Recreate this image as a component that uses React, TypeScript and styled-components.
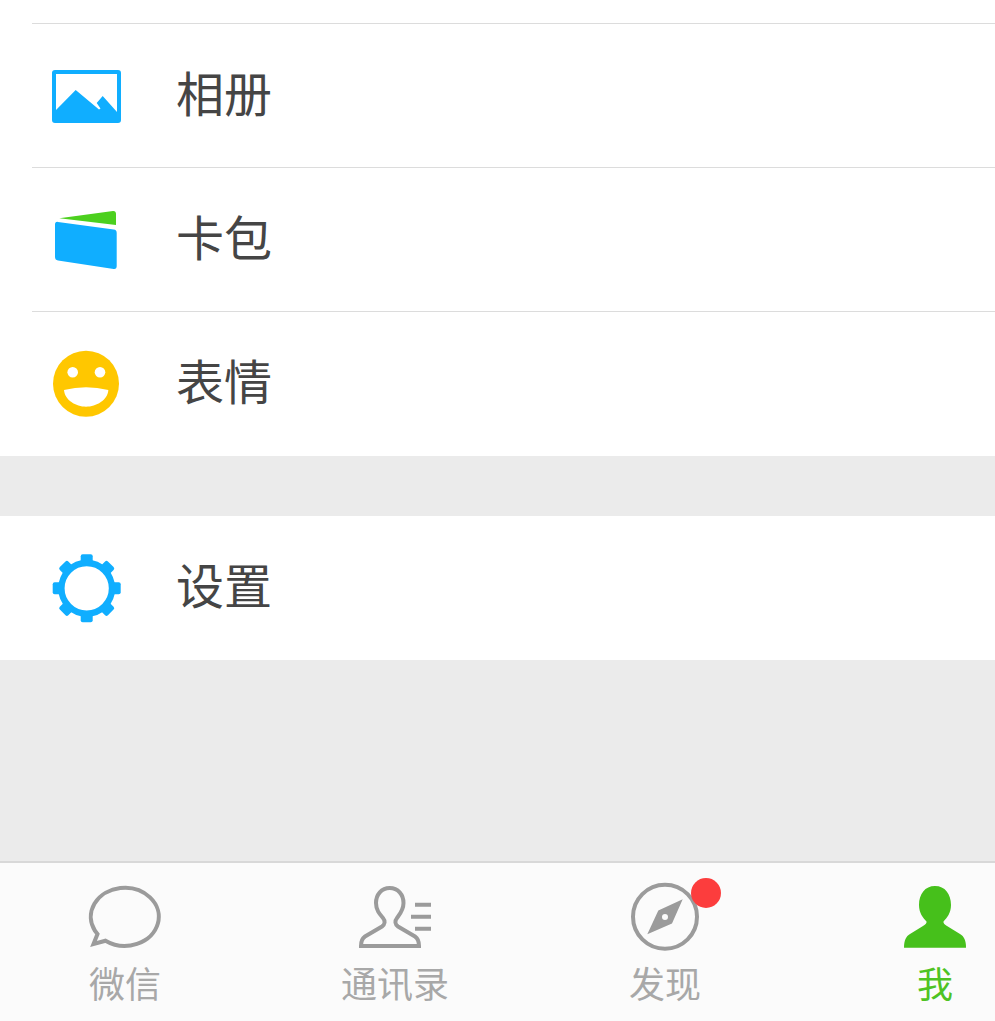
import React from "react";
import styled, { createGlobalStyle } from "styled-components";

const Global = createGlobalStyle`
  html, body { margin: 0; padding: 0; background: #ebebeb; overflow: hidden; }
  * { box-sizing: border-box; }
`;

const Page = styled.div`
  width: 100%;
  height: 100vh;
  display: flex;
  flex-direction: column;
  overflow: hidden;
  background: #ebebeb;
  font-family: "Noto Sans CJK SC", "Noto Sans", sans-serif;
`;

const Section = styled.section<{ $gap?: number; $pad?: number }>`
  background: #fff;
  margin-top: ${(p) => p.$gap ?? 0}px;
  padding-top: ${(p) => p.$pad ?? 0}px;
  padding-bottom: ${(p) => (p.$pad ? 1 : 0)}px;
  flex-shrink: 0;
`;

const Row = styled.div<{ $line?: boolean }>`
  height: 144px;
  margin-left: 32px;
  display: flex;
  align-items: flex-start;
  border-top: ${(p) => (p.$line ? "1px solid #dcdcdc" : "0")};
`;

const IconSlot = styled.div`
  width: 144px;
  height: 112px;
  padding: 32px 0 0 16px;
  flex-shrink: 0;
`;

const RowIcon = styled.svg`
  display: block;
  width: 80px;
  height: 80px;
`;

const RowLabel = styled.span`
  font-size: 48px;
  line-height: 135px;
  font-weight: 400;
  color: #454545;
`;

const Filler = styled.div`
  flex: 1;
`;

const TabBar = styled.nav`
  width: 1080px;
  height: 160px;
  margin-left: -10px;
  flex-shrink: 0;
  display: flex;
  background: #fbfbfb;
  border-top: 2px solid #d8d8d8;
`;

const Tab = styled.div`
  width: 270px;
  padding-top: 18px;
  display: flex;
  flex-direction: column;
  align-items: center;
`;

const TabIconWrap = styled.div`
  position: relative;
  width: 90px;
  height: 70px;
`;

const TabIcon = styled.svg`
  display: block;
  width: 90px;
  height: 70px;
  overflow: visible;
`;

const Badge = styled.span`
  position: absolute;
  left: 71px;
  top: -3px;
  width: 30px;
  height: 30px;
  border-radius: 50%;
  background: #fc3d3d;
`;

const TabLabel = styled.span<{ $active?: boolean }>`
  font-size: 36px;
  line-height: 62px;
  font-weight: 400;
  color: ${(p) => (p.$active ? "#4ec323" : "#a8a8a8")};
`;

const BLUE = "#10aeff";
const GREY = "#9b9b9b";

const rows1 = [
  {
    label: "相册",
    icon: (
      <path
        fill={BLUE}
        fillRule="evenodd"
        d="M7 14H70A3 3 0 0 1 73 17V64A3 3 0 0 1 70 67H7A3 3 0 0 1 4 64V17A3 3 0 0 1 7 14ZM8 18V54L27.7 34L51 53.5L52.5 52.5L48.7 47L54.7 40L69 56V18Z"
      />
    ),
  },
  {
    label: "卡包",
    icon: (
      <>
        <path fill="#4cd01e" d="M11.3 18.3L65 11Q68 10.8 68 14V25Z" />
        <path
          fill={BLUE}
          d="M10 21.9L65.7 29.6Q68.7 30 68.7 33V66Q68.7 69.4 65.7 69L10 60.5Q7 60 7 57V24.5Q7 21.5 10 21.9Z"
        />
      </>
    ),
  },
  {
    label: "表情",
    icon: (
      <>
        <circle cx="38" cy="39.7" r="33" fill="#ffc700" />
        <circle cx="24.7" cy="28.3" r="5.3" fill="#fff" />
        <circle cx="52" cy="28.3" r="5.3" fill="#fff" />
        <path
          fill="#fff"
          d="M16 46Q38 40.5 60.3 46C60 56 48 62.7 38 62.7C28 62.7 16.5 56 16 46Z"
        />
      </>
    ),
  },
];

const angles = [0, 45, 90, 135, 180, 225, 270, 315];

const Gear = () => (
  <>
    <circle cx="38.7" cy="40.3" r="25.3" fill="none" stroke={BLUE} strokeWidth="6.4" />
    {angles.map((a) => (
      <rect
        key={a}
        x="32.7"
        y="6.3"
        width="12"
        height="10"
        rx="2"
        fill={BLUE}
        transform={`rotate(${a} 38.7 40.3)`}
      />
    ))}
  </>
);

export default function App() {
  return (
    <Page>
      <Global />
      <Section $pad={23}>
        {rows1.map((r) => (
          <Row $line key={r.label}>
            <IconSlot>
              <RowIcon viewBox="0 0 80 80">{r.icon}</RowIcon>
            </IconSlot>
            <RowLabel>{r.label}</RowLabel>
          </Row>
        ))}
      </Section>
      <Section $gap={60}>
        <Row>
          <IconSlot>
            <RowIcon viewBox="0 0 80 80">
              <Gear />
            </RowIcon>
          </IconSlot>
          <RowLabel>设置</RowLabel>
        </Row>
      </Section>
      <Filler />
      <TabBar>
        <Tab>
          <TabIconWrap>
            <TabIcon viewBox="0 1 90 70">
              <path
                fill="none"
                stroke={GREY}
                strokeWidth="4"
                d="M25.5 60.7A34 29 0 1 0 15 50.8L17.5 54L13.5 64Z"
              />
            </TabIcon>
          </TabIconWrap>
          <TabLabel>微信</TabLabel>
        </Tab>
        <Tab>
          <TabIconWrap>
            <TabIcon viewBox="0 1 90 70">
              <path
                fill="none"
                stroke={GREY}
                strokeWidth="4"
                d="M39.7 8C31.5 8 26 14.5 26 23C26 30 29.5 34 33 38C35.5 41 35 44.5 32 46.5L15 56.5C12 58.5 11 61 11 66H69C69 61 68 58.5 65 56.5L48 46.5C45 44.5 44.5 41 47 38C50 34 53.5 30 53.5 23C53.5 14.5 48 8 39.7 8Z"
              />
              <path fill={GREY} d="M65 22.7H81V26.7H65ZM61 34.7H81V38.7H61ZM65 46.7H81V50.7H65Z" />
            </TabIcon>
          </TabIconWrap>
          <TabLabel>通讯录</TabLabel>
        </Tab>
        <Tab>
          <TabIconWrap>
            <TabIcon viewBox="0 1 90 70">
              <circle cx="45" cy="36.8" r="32" fill="none" stroke={GREY} strokeWidth="4" />
              <path
                fill={GREY}
                fillRule="evenodd"
                d="M62.7 19.3L52 43.5L27.3 54.3L38.3 30.5ZM45 33.9A3 3 0 1 0 45 39.9A3 3 0 1 0 45 33.9Z"
              />
            </TabIcon>
            <Badge />
          </TabIconWrap>
          <TabLabel>发现</TabLabel>
        </Tab>
        <Tab>
          <TabIconWrap>
            <TabIcon viewBox="0 1 90 70">
              <path
                fill="#46c01b"
                d="M45 6C35 6 29 14 29 25C29 33 33 38 36.5 41.5C37 43.5 35 44.5 33 46L20 54C16 56.5 14 60 14 67.7H76C76 60 74 56.5 70 54L57 46C55 44.5 53 43.5 53.5 41.5C57 38 61 33 61 25C61 14 55 6 45 6Z"
              />
            </TabIcon>
          </TabIconWrap>
          <TabLabel $active>我</TabLabel>
        </Tab>
      </TabBar>
    </Page>
  );
}
